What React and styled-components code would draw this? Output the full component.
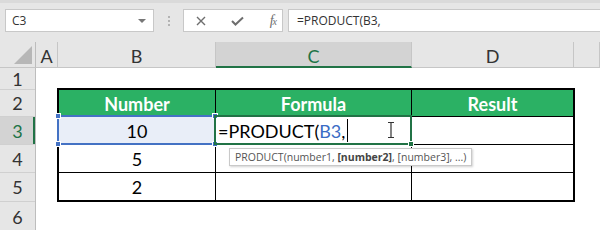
import React from "react";
import styled, { createGlobalStyle, css } from "styled-components";

const GlobalStyle = createGlobalStyle`
  html, body { margin: 0; padding: 0; background: #fff; }
  body { font-family: "Lato", "Open Sans", sans-serif; }
  * { box-sizing: border-box; }
`;

const GREEN = "#217346";
const BLUE = "#4472c4";

const Window = styled.div`
  width: 600px;
  height: 230px;
  overflow: hidden;
  display: flex;
  flex-direction: column;
  background: #fff;
`;

const Toolbar = styled.div`
  height: 42px;
  flex: none;
  background: #e6e6e6;
  border-top: 3px solid #dadada;
  display: flex;
  align-items: flex-start;
  padding: 6px 0 0 5px;
`;

const Field = styled.div`
  height: 23px;
  background: #fff;
  border: 1px solid #c8c8c8;
  display: flex;
  align-items: center;
  font-family: "Open Sans", "Noto Sans", sans-serif;
  font-size: 12px;
  color: #333;
`;

const NameBox = styled(Field)`
  width: 149px;
  padding: 0 7px 0 6px;
  justify-content: space-between;
`;

const DropCaret = styled.span`
  width: 0;
  height: 0;
  border-left: 4px solid transparent;
  border-right: 4px solid transparent;
  border-top: 4px solid #777;
`;

const Grip = styled.div`
  width: 29px;
  height: 23px;
  display: flex;
  flex-direction: column;
  align-items: center;
  justify-content: center;
  gap: 2px;
`;

const Dot = styled.i`
  width: 2px;
  height: 2px;
  background: #b3b3b3;
`;

const FxButtons = styled(Field)`
  width: 100px;
  padding: 0 6px 0 12px;
  justify-content: space-between;
`;

const FxIcon = styled.span`
  font-family: "Liberation Serif", serif;
  font-style: italic;
  color: #6e6e6e;
  font-size: 14px;
  letter-spacing: -1px;
  & small { font-size: 10px; }
`;

const FormulaBox = styled(Field)`
  flex: 1;
  margin-left: 5px;
  border-right: none;
  padding-left: 8px;
`;

const ColumnHeaders = styled.div`
  height: 26px;
  flex: none;
  display: flex;
  background: #e6e6e6;
`;

const Corner = styled.div`
  width: 36px;
  position: relative;
  border-right: 1px solid #bdbdbd;
  border-bottom: 1px solid #c6c6c6;
  display: flex;
  align-items: flex-end;
  justify-content: flex-end;
  padding: 0 3px 3px 0;
`;

const CornerTriangle = styled.span`
  width: 0;
  height: 0;
  border-left: 18px solid transparent;
  border-bottom: 18px solid #b7b7b7;
`;

const ColHead = styled.div`
  width: ${(p) => p.$w}px;
  flex: ${(p) => (p.$grow ? 1 : "none")};
  display: flex;
  align-items: center;
  justify-content: center;
  padding-top: 3px;
  font-size: 18px;
  color: #333;
  border-right: 1px solid #c6c6c6;
  border-bottom: 1px solid #c6c6c6;
  ${(p) =>
    p.$active &&
    css`
      background: #d3d3d3;
      color: ${GREEN};
      border-bottom: 2px solid ${GREEN};
    `}
`;

const Body = styled.div`
  flex: 1;
  display: flex;
  min-height: 0;
`;

const RowHeaders = styled.div`
  width: 36px;
  flex: none;
  display: flex;
  flex-direction: column;
  background: #e6e6e6;
  border-right: 1px solid #bdbdbd;
`;

const RowHead = styled.div`
  height: ${(p) => p.$h}px;
  flex: none;
  display: flex;
  align-items: center;
  justify-content: center;
  font-size: 18px;
  color: #333;
  border-bottom: 1px solid #d0d0d0;
  ${(p) =>
    p.$active &&
    css`
      background: #d3d3d3;
      color: ${GREEN};
      box-shadow: inset -2px 0 0 ${GREEN};
    `}
`;

const Canvas = styled.div`
  flex: 1;
  position: relative;
  padding: 20px 0 0 21px;
`;

const DataTable = styled.div`
  width: 518px;
  display: grid;
  grid-template-columns: 157px 196px 161px;
  grid-template-rows: 27px 28px 28px 27px;
  border: 2px solid #000;
`;

const Cell = styled.div`
  position: relative;
  display: flex;
  align-items: center;
  justify-content: ${(p) => (p.$left ? "flex-start" : "center")};
  padding-left: ${(p) => (p.$left ? "2px" : "0")};
  font-size: 18px;
  color: #000;
  border-right: ${(p) => (p.$lastCol ? "none" : "1px solid #000")};
  border-bottom: ${(p) => (p.$lastRow ? "none" : "1px solid #000")};
  white-space: nowrap;
  ${(p) =>
    p.$head &&
    css`
      background: #2bb164;
      color: #fff;
      font-weight: 700;
      padding-top: 1px;
    `}
  ${(p) =>
    p.$ref &&
    css`
      background: #e9eef8;
    `}
`;

const Frame = styled.span`
  position: absolute;
  top: -2px;
  left: -2px;
  right: -1px;
  bottom: -1px;
  border: 2px solid ${(p) => p.$color};
  pointer-events: none;
  z-index: 2;
`;

const Handle = styled.span`
  position: absolute;
  width: 6px;
  height: 6px;
  background: ${(p) => p.$color};
  border: 1px solid #fff;
  ${(p) => (p.$v === "top" ? "top: -4px;" : "bottom: -4px;")}
  ${(p) => (p.$h === "left" ? "left: -4px;" : "right: -4px;")}
`;

const RefName = styled.span`
  color: #3b6cc5;
`;

const TextCaret = styled.span`
  display: inline-block;
  width: 1px;
  height: 23px;
  margin-left: 2px;
  background: #000;
  vertical-align: middle;
`;

const Tooltip = styled.div`
  position: absolute;
  left: 193px;
  top: 80px;
  height: 18px;
  padding: 0 5px;
  display: flex;
  align-items: center;
  background: #fff;
  border: 1px solid #c9c9c9;
  box-shadow: 1px 1px 2px rgba(0, 0, 0, 0.18);
  font-family: "Open Sans", "Noto Sans", sans-serif;
  font-size: 10.5px;
  color: #555;
  white-space: nowrap;
  z-index: 3;
  & b { color: #444; }
`;

const IBeam = styled.svg`
  position: absolute;
  left: 351px;
  top: 54px;
  z-index: 3;
`;

export default function App() {
  const cols = [
    { k: "A", w: 22 },
    { k: "B", w: 158 },
    { k: "C", w: 196, active: true },
    { k: "D", w: 162 },
    { k: "E", w: 26, grow: true, empty: true },
  ];
  const rows = [
    { n: 1, h: 22 },
    { n: 2, h: 27 },
    { n: 3, h: 28, active: true },
    { n: 4, h: 28 },
    { n: 5, h: 29 },
    { n: 6, h: 30 },
  ];
  return (
    <>
      <GlobalStyle />
      <Window>
        <Toolbar>
          <NameBox>
            <span>C3</span>
            <DropCaret />
          </NameBox>
          <Grip>
            <Dot />
            <Dot />
            <Dot />
          </Grip>
          <FxButtons>
            <svg width="10" height="10" viewBox="0 0 10 10">
              <path d="M1 1 L9 9 M9 1 L1 9" stroke="#6e6e6e" strokeWidth="1.4" fill="none" />
            </svg>
            <svg width="13" height="10" viewBox="0 0 13 10">
              <path d="M1 5 L4.5 8.5 L12 1.5" stroke="#6e6e6e" strokeWidth="2" fill="none" />
            </svg>
            <FxIcon>
              f<small>x</small>
            </FxIcon>
          </FxButtons>
          <FormulaBox>=PRODUCT(B3,</FormulaBox>
        </Toolbar>
        <ColumnHeaders>
          <Corner>
            <CornerTriangle />
          </Corner>
          {cols.map((c) => (
            <ColHead key={c.k} $w={c.w} $active={c.active} $grow={c.grow}>
              {c.empty ? "" : c.k}
            </ColHead>
          ))}
        </ColumnHeaders>
        <Body>
          <RowHeaders>
            {rows.map((r) => (
              <RowHead key={r.n} $h={r.h} $active={r.active}>
                {r.n}
              </RowHead>
            ))}
          </RowHeaders>
          <Canvas>
            <DataTable>
              <Cell $head>Number</Cell>
              <Cell $head>Formula</Cell>
              <Cell $head $lastCol>Result</Cell>

              <Cell $ref>
                10
                <Frame $color={BLUE}>
                  <Handle $color={BLUE} $v="top" $h="left" />
                  <Handle $color={BLUE} $v="top" $h="right" />
                  <Handle $color={BLUE} $v="bottom" $h="left" />
                  <Handle $color={BLUE} $v="bottom" $h="right" />
                </Frame>
              </Cell>
              <Cell $left>
                =PRODUCT(<RefName>B3</RefName>,<TextCaret />
                <Frame $color={GREEN}>
                  <Handle $color={GREEN} $v="bottom" $h="right" />
                </Frame>
              </Cell>
              <Cell $lastCol />

              <Cell>5</Cell>
              <Cell />
              <Cell $lastCol />

              <Cell $lastRow>2</Cell>
              <Cell $lastRow />
              <Cell $lastRow $lastCol />
            </DataTable>
            <Tooltip>
              PRODUCT(number1,&nbsp;<b>[number2]</b>, [number3], ...)
            </Tooltip>
            <IBeam width="8" height="16" viewBox="0 0 8 16">
              <path d="M1 0.5 H7 M4 0.5 V15.5 M1 15.5 H7" stroke="#333" strokeWidth="1.2" fill="none" />
            </IBeam>
          </Canvas>
        </Body>
      </Window>
    </>
  );
}
